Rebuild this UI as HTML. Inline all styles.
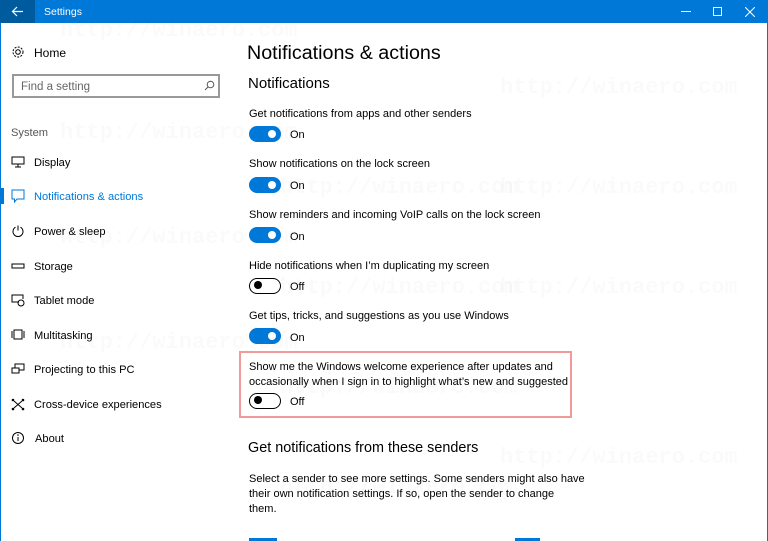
<!DOCTYPE html>
<html><head><style>
*{margin:0;padding:0;box-sizing:border-box}
body{width:768px;height:541px;overflow:hidden;background:#fff;font-family:"Liberation Sans",sans-serif;color:#000;position:relative}
.a{position:absolute;white-space:nowrap}
.tb{left:0;top:0;width:768px;height:23px;background:#0078d7}
.back{left:0;top:0;width:35px;height:23px;background:#005a9e}
.t{font-size:11px;margin-top:1px}
.nav{font-size:11.1px;color:#000;margin-top:1px}
.tog{position:absolute;width:32px;height:16px;border-radius:8px}
.on{background:#0078d7}
.on:after{content:"";position:absolute;right:5px;top:4px;width:8px;height:8px;border-radius:50%;background:#fff}
.off{border:1.6px solid #000;background:#fff}
.off:after{content:"";position:absolute;left:4px;top:2.4px;width:8px;height:8px;border-radius:50%;background:#000}
.wm{color:rgba(0,0,0,0.02);font-size:22px;font-weight:bold;font-family:"Liberation Mono",monospace}
</style></head><body>
<div class="a tb"></div>
<div class="a back"></div>
<svg class="a" style="left:11px;top:6px" width="13" height="11" viewBox="0 0 13 11"><path d="M6 1L1.5 5.5 6 10M1.5 5.5H12" stroke="#fff" stroke-width="1.2" fill="none"/></svg>
<div class="a t" style="left:44px;top:5px;color:#fff;font-size:10.5px">Settings</div>
<div class="a" style="left:681px;top:11px;width:10px;height:1px;background:#fff"></div>
<div class="a" style="left:713px;top:7px;width:9px;height:9px;border:1px solid #fff"></div>
<svg class="a" style="left:745px;top:7px" width="10" height="10"><path d="M0 0L10 10M10 0L0 10" stroke="#fff" stroke-width="1"/></svg>
<div class="a" style="left:0;top:23px;width:1px;height:518px;background:#0078d7"></div>
<div class="a" style="left:767px;top:23px;width:1px;height:518px;background:#0078d7"></div>

<div class="a wm" style="left:60px;top:18px">http://winaero.com</div>
<div class="a wm" style="left:60px;top:120px">http://winaero.com</div>
<div class="a wm" style="left:60px;top:225px">http://winaero.com</div>
<div class="a wm" style="left:60px;top:330px">http://winaero.com</div>
<div class="a wm" style="left:280px;top:175px">http://winaero.com</div>
<div class="a wm" style="left:280px;top:275px">http://winaero.com</div>
<div class="a wm" style="left:280px;top:375px">http://winaero.com</div>
<div class="a wm" style="left:280px;top:475px">http://winaero.com</div>
<div class="a wm" style="left:500px;top:75px">http://winaero.com</div>
<div class="a wm" style="left:500px;top:175px">http://winaero.com</div>
<div class="a wm" style="left:500px;top:275px">http://winaero.com</div>
<div class="a wm" style="left:500px;top:445px">http://winaero.com</div>

<svg class="a" style="left:11px;top:45px" width="14" height="14" viewBox="0 0 14 14"><circle cx="7" cy="7" r="2.3" stroke="#000" fill="none"/><circle cx="7" cy="7" r="5" stroke="#000" fill="none" stroke-dasharray="2 1.3"/></svg>
<div class="a nav" style="left:34px;top:45px;font-size:12px">Home</div>
<div class="a" style="left:12px;top:74px;width:208px;height:24px;border:2px solid #999"></div>
<div class="a nav" style="left:21px;top:80px;color:#666;font-size:11.5px">Find a setting</div>
<svg class="a" style="left:204px;top:80px" width="11" height="11"><circle cx="6.5" cy="4.5" r="3.3" stroke="#555" fill="none"/><path d="M4 7L1 10" stroke="#555"/></svg>
<div class="a nav" style="left:11px;top:126px;color:#555">System</div>

<svg class="a" style="left:11px;top:156px" width="14" height="12"><rect x="1" y="1" width="12" height="7" stroke="#000" fill="none"/><path d="M7 8v3M4 11h6" stroke="#000"/></svg>
<div class="a nav" style="left:34px;top:156px">Display</div>
<div class="a" style="left:1px;top:188px;width:3px;height:16px;background:#0078d7"></div>
<svg class="a" style="left:11px;top:189px" width="14" height="14"><path d="M1 1h12v9H6L3.5 13V10H1z" stroke="#0078d7" fill="none"/></svg>
<div class="a nav" style="left:34px;top:190px;color:#0078d7">Notifications &amp; actions</div>
<svg class="a" style="left:11px;top:224px" width="14" height="14"><path d="M4.5 3.2A5 5 0 1 0 9.5 3.2M7 1.5v5" stroke="#000" fill="none"/></svg>
<div class="a nav" style="left:34px;top:225px">Power &amp; sleep</div>
<svg class="a" style="left:11px;top:263px" width="14" height="8"><rect x="1" y="1" width="12" height="4" stroke="#000" fill="none"/></svg>
<div class="a nav" style="left:34px;top:260px">Storage</div>
<svg class="a" style="left:11px;top:293px" width="14" height="14"><path d="M8 9H1V2h11v4" stroke="#000" fill="none"/><circle cx="10" cy="10" r="3" stroke="#000" fill="none"/></svg>
<div class="a nav" style="left:34px;top:294px">Tablet mode</div>
<svg class="a" style="left:11px;top:329px" width="14" height="12"><rect x="3" y="1" width="8" height="9" stroke="#000" fill="none"/><path d="M1 2v7M13 2v7" stroke="#000"/></svg>
<div class="a nav" style="left:34px;top:329px">Multitasking</div>
<svg class="a" style="left:11px;top:363px" width="14" height="13"><rect x="4" y="1" width="9" height="6" stroke="#000" fill="none"/><rect x="1" y="5" width="7" height="5" stroke="#000" fill="#fff"/></svg>
<div class="a nav" style="left:34px;top:363px">Projecting to this PC</div>
<svg class="a" style="left:11px;top:398px" width="14" height="13"><path d="M3 3l8 7M11 3l-8 7" stroke="#000"/><circle cx="2" cy="2" r="1.3" fill="#000"/><circle cx="12" cy="2" r="1.3" fill="#000"/><circle cx="2" cy="11" r="1.3" fill="#000"/><circle cx="12" cy="11" r="1.3" fill="#000"/></svg>
<div class="a nav" style="left:34px;top:398px">Cross-device experiences</div>
<svg class="a" style="left:11px;top:431px" width="14" height="14"><circle cx="7" cy="7" r="5.5" stroke="#000" fill="none"/><path d="M7 6v4" stroke="#000"/><circle cx="7" cy="4" r=".8" fill="#000"/></svg>
<div class="a nav" style="left:35px;top:432px">About</div>

<div class="a" style="left:247px;top:42px;font-size:19.7px">Notifications &amp; actions</div>
<div class="a" style="left:248px;top:75px;font-size:15px">Notifications</div>

<div class="a t" style="left:249px;top:107px">Get notifications from apps and other senders</div>
<div class="tog on" style="left:249px;top:126px"></div><div class="a t" style="left:290px;top:128px">On</div>
<div class="a t" style="left:249px;top:157px">Show notifications on the lock screen</div>
<div class="tog on" style="left:249px;top:177px"></div><div class="a t" style="left:290px;top:179px">On</div>
<div class="a t" style="left:249px;top:208px">Show reminders and incoming VoIP calls on the lock screen</div>
<div class="tog on" style="left:249px;top:227px"></div><div class="a t" style="left:290px;top:230px">On</div>
<div class="a t" style="left:249px;top:259px">Hide notifications when I’m duplicating my screen</div>
<div class="tog off" style="left:249px;top:278px"></div><div class="a t" style="left:290px;top:280px">Off</div>
<div class="a t" style="left:249px;top:309px">Get tips, tricks, and suggestions as you use Windows</div>
<div class="tog on" style="left:249px;top:328px"></div><div class="a t" style="left:290px;top:331px">On</div>

<div class="a" style="left:239px;top:351px;width:333px;height:67px;border:2px solid #f19a9a"></div>
<div class="a t" style="left:249px;top:360px">Show me the Windows welcome experience after updates and</div>
<div class="a t" style="left:249px;top:375px">occasionally when I sign in to highlight what’s new and suggested</div>
<div class="tog off" style="left:249px;top:393px"></div><div class="a t" style="left:290px;top:395px">Off</div>

<div class="a" style="left:248px;top:440px;font-size:14.4px">Get notifications from these senders</div>
<div class="a t" style="left:249px;top:472px">Select a sender to see more settings. Some senders might also have</div>
<div class="a t" style="left:249px;top:487px">their own notification settings. If so, open the sender to change</div>
<div class="a t" style="left:249px;top:502px">them.</div>
<div class="a" style="left:249px;top:538px;width:28px;height:3px;background:#0078d7"></div>
<div class="a" style="left:515px;top:538px;width:25px;height:3px;background:#0078d7"></div>
</body></html>
